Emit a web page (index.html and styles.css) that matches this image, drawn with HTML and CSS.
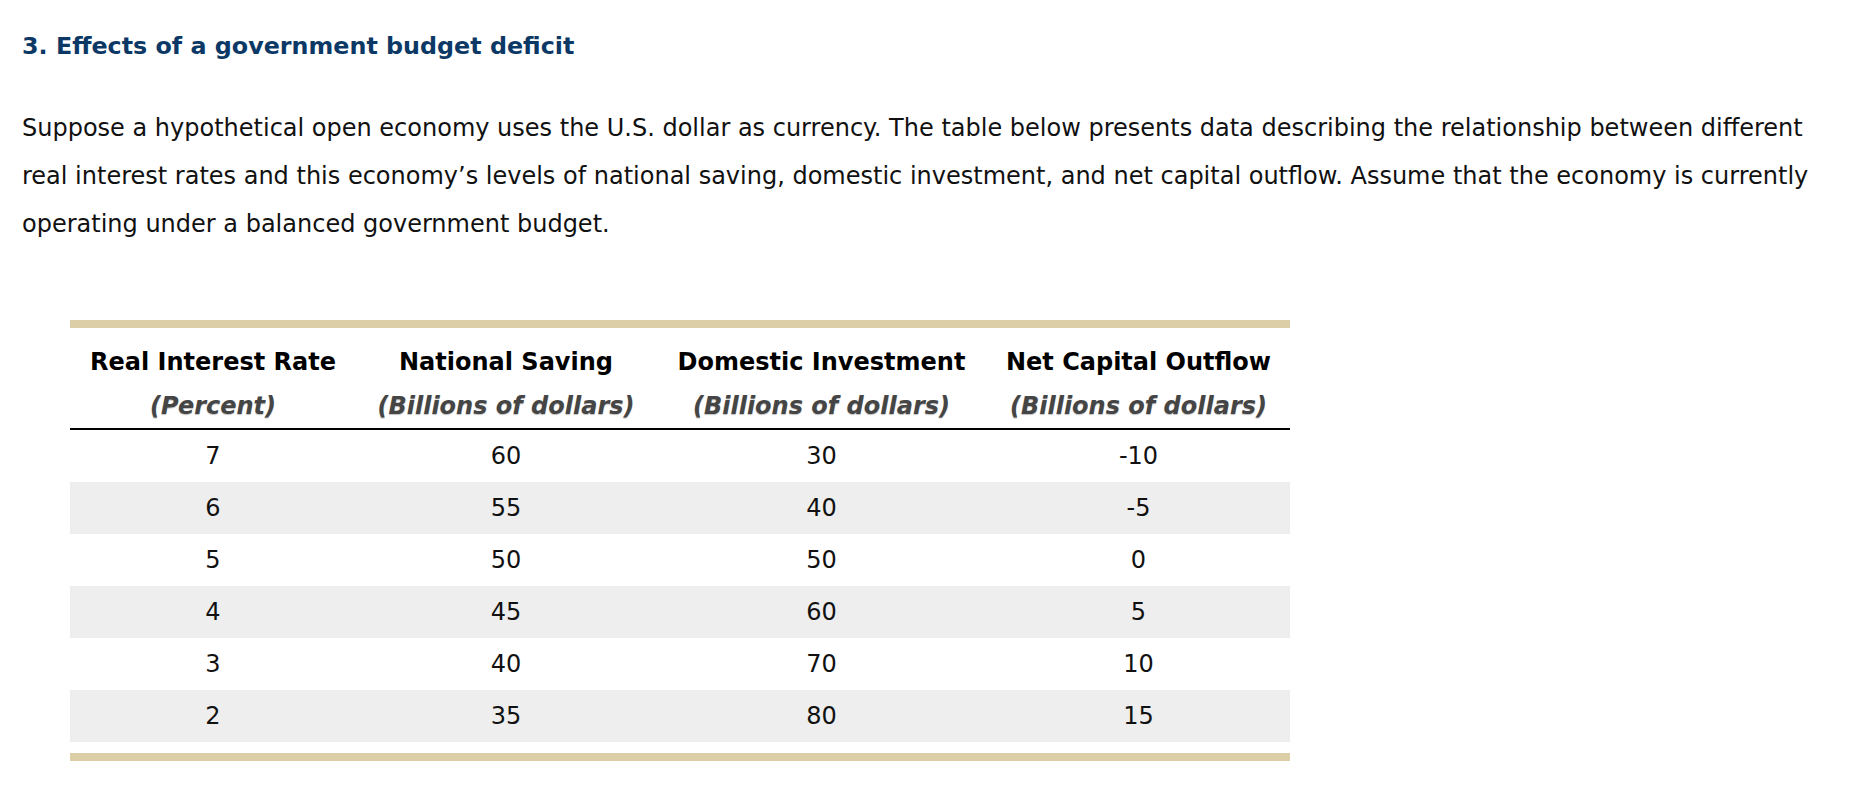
FILE: index.html
```html
<!DOCTYPE html>
<html lang="en">
<head>
<meta charset="utf-8">
<title>Effects of a government budget deficit</title>
<link rel="stylesheet" href="styles.css">
</head>
<body>
<main class="page">
  <h1 class="title">3. Effects of a government budget deficit</h1>
  <p class="intro">Suppose a hypothetical open economy uses the U.S. dollar as currency. The table below presents data describing the relationship between different real interest rates and this economy’s levels of national saving, domestic investment, and net capital outflow. Assume that the economy is currently operating under a balanced government budget.</p>
  <div class="table-wrap">
    <table class="data">
      <colgroup>
        <col class="c1"><col class="c2"><col class="c3"><col class="c4">
      </colgroup>
      <thead>
        <tr class="head-main">
          <th>Real Interest Rate</th>
          <th>National Saving</th>
          <th>Domestic Investment</th>
          <th>Net Capital Outflow</th>
        </tr>
        <tr class="head-sub">
          <th>(Percent)</th>
          <th>(Billions of dollars)</th>
          <th>(Billions of dollars)</th>
          <th>(Billions of dollars)</th>
        </tr>
      </thead>
      <tbody>
        <tr><td>7</td><td>60</td><td>30</td><td>-10</td></tr>
        <tr><td>6</td><td>55</td><td>40</td><td>-5</td></tr>
        <tr><td>5</td><td>50</td><td>50</td><td>0</td></tr>
        <tr><td>4</td><td>45</td><td>60</td><td>5</td></tr>
        <tr><td>3</td><td>40</td><td>70</td><td>10</td></tr>
        <tr><td>2</td><td>35</td><td>80</td><td>15</td></tr>
      </tbody>
    </table>
  </div>
</main>
</body>
</html>
```

FILE: styles.css
```css
html, body {
  margin: 0;
  padding: 0;
  background: #ffffff;
}

body {
  font-family: "DejaVu Sans", Verdana, sans-serif;
  color: #111111;
}

.page {
  padding: 32px 22px 0 22px;
}

.title {
  margin: 0;
  font-size: 23.8px;
  line-height: 29px;
  font-weight: bold;
  color: #0c3866;
}

.intro {
  margin: 43px 0 0 0;
  font-size: 24px;
  line-height: 48px;
}

.table-wrap {
  margin: 72px 0 0 48px;
  width: 1220px;
  border-top: 8px solid #dccfa7;
  border-bottom: 8px solid #dccfa7;
  padding: 12px 0 11px 0;
}

.data {
  width: 1220px;
  border-collapse: collapse;
  table-layout: fixed;
  font-size: 24px;
}

.c1 { width: 286px; }
.c2 { width: 300px; }
.c3 { width: 331px; }
.c4 { width: 303px; }

.data th {
  padding: 0;
  text-align: center;
  white-space: nowrap;
}

.head-main th {
  height: 44px;
  font-weight: bold;
  color: #000000;
}

.head-sub th {
  height: 44px;
  font-weight: bold;
  font-style: italic;
  color: #454545;
  text-shadow: 0 1px 1px rgba(0, 0, 0, 0.25);
  border-bottom: 2px solid #000000;
}

.data td {
  height: 52px;
  padding: 0;
  text-align: center;
  color: #111111;
}

.data tbody tr:nth-child(even) td {
  background: #eeeeee;
}
```
